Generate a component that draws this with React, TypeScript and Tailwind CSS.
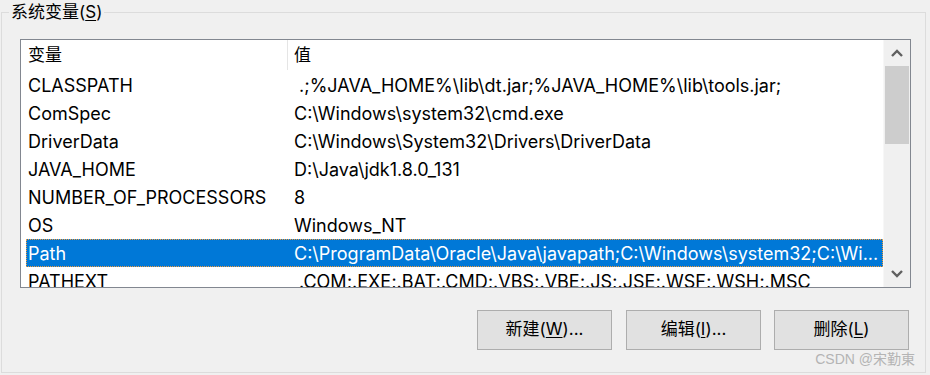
import React from "react";

const rows: { name: string; value: string; selected?: boolean }[] = [
  { name: "CLASSPATH", value: " .;%JAVA_HOME%\\lib\\dt.jar;%JAVA_HOME%\\lib\\tools.jar;" },
  { name: "ComSpec", value: "C:\\Windows\\system32\\cmd.exe" },
  { name: "DriverData", value: "C:\\Windows\\System32\\Drivers\\DriverData" },
  { name: "JAVA_HOME", value: "D:\\Java\\jdk1.8.0_131" },
  { name: "NUMBER_OF_PROCESSORS", value: "8" },
  { name: "OS", value: "Windows_NT" },
  {
    name: "Path",
    value: "C:\\ProgramData\\Oracle\\Java\\javapath;C:\\Windows\\system32;C:\\Wi...",
    selected: true,
  },
  { name: "PATHEXT", value: " .COM;.EXE;.BAT;.CMD;.VBS;.VBE;.JS;.JSE;.WSF;.WSH;.MSC" },
];

function Chevron({ down }: { down?: boolean }) {
  return (
    <svg width="12" height="8" viewBox="0 0 12 8" className={down ? "rotate-180" : ""}>
      <path d="M1 7 L6 2 L11 7" fill="none" stroke="#606060" strokeWidth="2.4" />
    </svg>
  );
}

function WinButton({ label, hot, rest }: { label: string; hot: string; rest: string }) {
  return (
    <button className="flex h-[40px] w-[135px] items-center justify-center border border-[#adadad] bg-[#e1e1e1] text-[17px] text-black">
      {label}(<span className="underline underline-offset-2">{hot}</span>){rest}
    </button>
  );
}

export default function App() {
  return (
    <div
      className="relative h-[375px] w-[930px] overflow-hidden bg-[#f0f0f0] text-black"
      style={{ fontFamily: 'Inter, "Noto Sans CJK SC", sans-serif' }}
    >
      <div className="relative ml-[1px] mt-[12px] h-[361px] w-[925px] border border-[#dcdcdc]">
        <span className="absolute left-[7px] top-[-12px] bg-[#f0f0f0] px-[2px] text-[17px] leading-[22px]">
          系统变量(<span className="underline underline-offset-2">S</span>)
        </span>

        <div className="ml-[18px] mt-[26px] flex h-[249px] w-[891px] border border-[#828790] bg-white">
          <div className="w-[862px] overflow-hidden text-[18px]">
            <div className="flex h-[31px] items-center">
              <div className="w-[266px] pl-[7px] text-[17px]">变量</div>
              <div className="h-[30px] w-px self-start bg-[#e5e5e5]" />
              <div className="pl-[6px] text-[17px]">值</div>
            </div>
            {rows.map((r) => (
              <div
                key={r.name}
                className={
                  r.selected
                    ? "ml-[5px] flex h-[28px] w-[857px] items-center border border-dotted border-[#f39c3c] bg-[#0078d7] text-white"
                    : "ml-[5px] flex h-[28px] w-[857px] items-center border border-transparent"
                }
              >
                <div className="w-[265px] shrink-0 whitespace-nowrap pl-[1px]">{r.name}</div>
                <div className="overflow-hidden whitespace-pre pl-[2px]">{r.value}</div>
              </div>
            ))}
          </div>
          <div className="flex w-[27px] flex-col border-l border-[#f7f7f7] bg-[#f0f0f0]">
            <div className="flex h-[26px] items-center justify-center">
              <Chevron />
            </div>
            <div className="mx-[1px] h-[78px] bg-[#cdcdcd]" />
            <div className="flex-1" />
            <div className="flex h-[26px] items-center justify-center">
              <Chevron down />
            </div>
          </div>
        </div>

        <div className="ml-[475px] mt-[22px] flex gap-[14px]">
          <WinButton label="新建" hot="W" rest="..." />
          <WinButton label="编辑" hot="I" rest="..." />
          <div className="-ml-[1px]">
            <WinButton label="删除" hot="L" rest="" />
          </div>
        </div>

        <span
          className="absolute right-[10px] top-[336px] text-[14px] text-[#b4b4b4]"
          style={{ fontFamily: '"Liberation Sans", "Noto Sans CJK SC", sans-serif' }}
        >
          CSDN @宋勤東
        </span>
      </div>
    </div>
  );
}
